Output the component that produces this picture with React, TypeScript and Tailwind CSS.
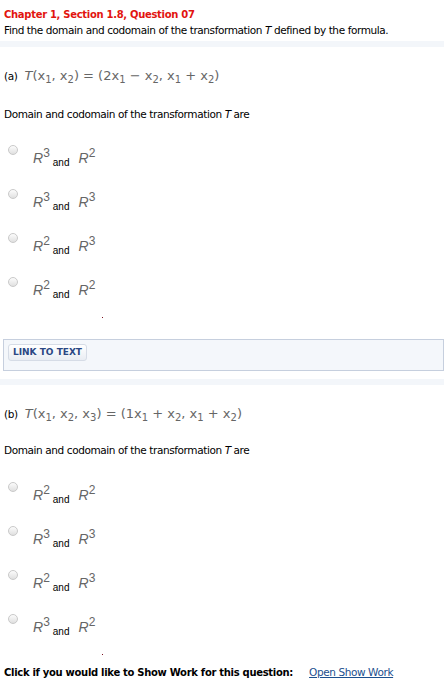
import React from "react";

const Radio = () => (
  <span className="mt-[0px] ml-[8px] block h-[10px] w-[10px] shrink-0 rounded-full border border-[#c9c9c9] bg-gradient-to-b from-[#fcfcfc] to-[#e0e0e0]" />
);

const Opt = ({ a, b }: { a: string; b: string }) => (
  <div className="flex h-[44px] items-start">
    <Radio />
    <div className="ml-[15px] mt-[6px] whitespace-nowrap font-['Liberation_Sans',sans-serif] text-[#666] leading-none">
      <span className="italic text-[14px]">R</span>
      <span className="relative -top-[6px] text-[12px]">{a}</span>
      <span className="relative top-[3px] ml-[3px] mr-[9px] text-[10px] text-black">and</span>
      <span className="italic text-[14px]">R</span>
      <span className="relative -top-[6px] text-[12px]">{b}</span>
    </div>
  </div>
);

const Sub = ({ c }: { c: string }) => (
  <span className="relative top-[3px] text-[10px]">{c}</span>
);

const Dot = () => (
  <div className="h-[1px] w-[1px] ml-[102px] bg-[#7a1020]" />
);

export default function App() {
  return (
    <div className="h-[686px] w-[444px] overflow-hidden bg-white font-['DejaVu_Sans',Verdana,sans-serif] text-[10.5px] tracking-[-0.4px] text-black">
      <div className="pl-[4px] pt-[8px] leading-[13px]">
        <div className="text-[10px] font-bold tracking-[-0.3px] text-[#e2140f]">Chapter 1, Section 1.8, Question 07</div>
        <div className="mt-[3px]">
          Find the domain and codomain of the transformation <i>T</i> defined by the formula.
        </div>
      </div>
      <div className="mt-[4px] h-[6px] bg-[#f3f6fa]" />

      {/* part a */}
      <div className="mt-[21px] flex items-baseline pl-[4px] leading-[16px]">
        <span>(a)</span>
        <span className="ml-[7px] text-[13px] tracking-normal text-[#666]">
          <i>T</i>(x<Sub c="1" />, x<Sub c="2" />) = (2x<Sub c="1" /> − x<Sub c="2" />, x<Sub c="1" /> + x<Sub c="2" />)
        </span>
      </div>
      <div className="mt-[23px] pl-[4px] leading-[13px]">
        Domain and codomain of the transformation <i>T</i> are
      </div>
      <div className="mt-[24px] tracking-normal">
        <Opt a="3" b="2" />
        <Opt a="3" b="3" />
        <Opt a="2" b="3" />
        <Opt a="2" b="2" />
      </div>
      <div className="mt-[-4px]">
        <Dot />
      </div>

      <div className="ml-[3px] mt-[21px] h-[32px] border border-[#c6cfde] bg-[#f4f7fb] pl-[4px] pt-[4px]">
        <div className="inline-block h-[17px] rounded-[3px] border border-[#d6dce6] bg-gradient-to-b from-[#ffffff] to-[#e9edf3] px-[4px] text-[9px] font-bold leading-[15px] tracking-normal text-[#2a4784]">
          LINK TO TEXT
        </div>
      </div>
      <div className="mt-[8px] h-[6px] bg-[#f3f6fa]" />

      {/* part b */}
      <div className="mt-[21px] flex items-baseline pl-[4px] leading-[16px]">
        <span>(b)</span>
        <span className="ml-[7px] text-[13px] tracking-normal text-[#666]">
          <i>T</i>(x<Sub c="1" />, x<Sub c="2" />, x<Sub c="3" />) = (1x<Sub c="1" /> + x<Sub c="2" />, x<Sub c="1" /> + x<Sub c="2" />)
        </span>
      </div>
      <div className="mt-[21px] pl-[4px] leading-[13px]">
        Domain and codomain of the transformation <i>T</i> are
      </div>
      <div className="mt-[25px] tracking-normal">
        <Opt a="2" b="2" />
        <Opt a="3" b="3" />
        <Opt a="2" b="3" />
        <Opt a="3" b="2" />
      </div>
      <div className="mt-[-4px]">
        <Dot />
      </div>

      <div className="mt-[11px] flex pl-[4px] leading-[13px]">
        <span className="text-[10px] font-bold tracking-[-0.3px]">Click if you would like to Show Work for this question:</span>
        <span className="ml-[16px] text-[#1b4f8e] underline">Open Show Work</span>
      </div>
    </div>
  );
}
